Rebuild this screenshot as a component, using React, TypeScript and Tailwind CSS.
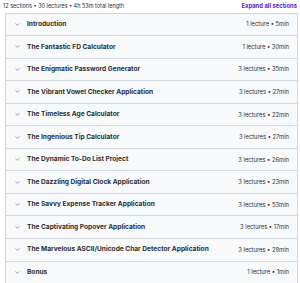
import { ChevronDown } from "lucide-react";

const sections = [
  { title: "Introduction", meta: "1 lecture • 5min" },
  { title: "The Fantastic FD Calculator", meta: "1 lecture • 30min" },
  { title: "The Enigmatic Password Generator", meta: "3 lectures • 35min" },
  { title: "The Vibrant Vowel Checker Application", meta: "3 lectures • 27min" },
  { title: "The Timeless Age Calculator", meta: "3 lectures • 22min" },
  { title: "The Ingenious Tip Calculator", meta: "3 lectures • 27min" },
  { title: "The Dynamic To-Do List Project", meta: "3 lectures • 26min" },
  { title: "The Dazzling Digital Clock Application", meta: "3 lectures • 23min" },
  { title: "The Savvy Expense Tracker Application", meta: "3 lectures • 53min" },
  { title: "The Captivating Popover Application", meta: "3 lectures • 17min" },
  { title: "The Marvelous ASCII/Unicode Char Detector Application", meta: "3 lectures • 28min" },
  { title: "Bonus", meta: "1 lecture • 1min" },
];

export default function App() {
  return (
    <div className="w-[300px] h-[283px] overflow-hidden bg-white text-[#2d2f31] font-['Inter',sans-serif]">
      <div className="flex h-[12.5px] items-center justify-between pl-[3px] pr-[3px]">
        <span className="whitespace-nowrap text-[5.5px] text-[#2d2f31]">12 sections • 30 lectures • 4h 53m total length</span>
        <span className="whitespace-nowrap text-[5.9px] font-bold text-[#5624d0]">Expand all sections</span>
      </div>
      <div className="ml-[5px] mr-[2px] border border-b-0 border-[#d1d7dc]">
        {sections.map((s) => (
          <div
            key={s.title}
            className="flex h-[22.55px] items-center justify-between border-b border-[#d1d7dc] bg-[#f7f9fa] pl-[8px] pr-[8px]"
          >
            <div className="flex items-center gap-[6px]">
              <ChevronDown className="h-[7px] w-[7px] text-[#6a6f73]" strokeWidth={2.2} />
              <span className="whitespace-nowrap text-[6.6px] font-bold leading-none">{s.title}</span>
            </div>
            <span className="whitespace-nowrap text-[5.8px] leading-none text-[#2d2f31]">{s.meta}</span>
          </div>
        ))}
      </div>
    </div>
  );
}
